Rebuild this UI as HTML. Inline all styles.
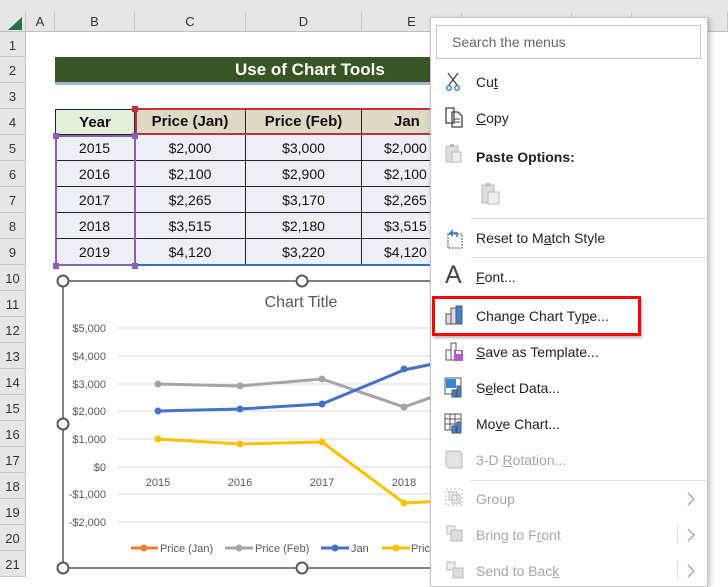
<!DOCTYPE html>
<html><head><style>
*{margin:0;padding:0;box-sizing:border-box}
body{width:728px;height:579px;overflow:hidden;background:#fff;font-family:"Liberation Sans",sans-serif;position:relative}
.a{position:absolute}
.ch{position:absolute;top:12px;height:20px;background:#e6e6e6;border-right:1px solid #c8c8c8;border-bottom:1px solid #bfbfbf;font-size:13px;color:#333;text-align:center;line-height:20px}
.rh{position:absolute;left:0;width:26px;height:26px;background:#e6e6e6;border-bottom:1px solid #c8c8c8;border-right:1px solid #bfbfbf;font-size:13px;color:#333;text-align:center;line-height:28px}
.c{position:absolute;height:26px;font-size:14px;text-align:center;line-height:26px;color:#111;border-right:1px solid #222;border-bottom:1px solid #222;background:#eceef8}
.h{font-weight:bold;font-size:15px;background:#ddd9c4}
.mi{position:absolute;left:476px;font-size:14px;color:#222}
.g{color:#a6a6a6}
.ic{position:absolute;left:444px}
</style></head><body>
<div class="a" style="left:0;top:0;width:728px;height:12px;background:#e6e6e6"></div>
<div class="ch" style="left:0;width:26px"><svg width="26" height="20"><polygon points="8,18 22,18 22,5" fill="#217346"/></svg></div>
<div class="ch" style="left:26px;width:29px">A</div>
<div class="ch" style="left:55px;width:80px">B</div>
<div class="ch" style="left:135px;width:111px">C</div>
<div class="ch" style="left:246px;width:116px">D</div>
<div class="ch" style="left:362px;width:100px">E</div>
<div class="ch" style="left:462px;width:110px"></div>
<div class="ch" style="left:572px;width:60px"></div>
<div class="ch" style="left:632px;width:96px"></div>
<div class="rh" style="top:32px;height:25px">1</div>
<div class="rh" style="top:57px">2</div>
<div class="rh" style="top:83px">3</div>
<div class="rh" style="top:109px">4</div>
<div class="rh" style="top:135px">5</div>
<div class="rh" style="top:161px">6</div>
<div class="rh" style="top:187px">7</div>
<div class="rh" style="top:213px">8</div>
<div class="rh" style="top:239px">9</div>
<div class="rh" style="top:265px">10</div>
<div class="rh" style="top:291px">11</div>
<div class="rh" style="top:317px">12</div>
<div class="rh" style="top:343px">13</div>
<div class="rh" style="top:369px">14</div>
<div class="rh" style="top:395px">15</div>
<div class="rh" style="top:421px">16</div>
<div class="rh" style="top:447px">17</div>
<div class="rh" style="top:473px">18</div>
<div class="rh" style="top:499px">19</div>
<div class="rh" style="top:525px">20</div>
<div class="rh" style="top:551px">21</div>

<div class="a" style="left:55px;top:57px;width:380px;height:25px;background:#375623;color:#fff;font-weight:bold;font-size:17px;line-height:26px;padding-left:180px">Use of Chart Tools</div>
<div class="a" style="left:55px;top:82px;width:380px;height:3px;background:#9fb6d9"></div>

<div class="c h" style="left:55px;top:109px;width:80px;background:#e2efda;border-top:1px solid #222;border-left:1px solid #222">Year</div>
<div class="c h" style="left:135px;top:109px;width:111px">Price (Jan)</div>
<div class="c h" style="left:246px;top:109px;width:116px">Price (Feb)</div>
<div class="c h" style="left:362px;top:109px;width:80px;text-align:left;padding-left:32px">Jan</div>
<div class="a" style="left:135px;top:108px;width:300px;height:2px;background:#c0313d"></div>
<div class="a" style="left:135px;top:108px;width:2px;height:27px;background:#c0313d"></div>
<div class="a" style="left:135px;top:133px;width:300px;height:2px;background:#c0313d"></div>

<div class="c" style="left:55px;top:135px;width:80px">2015</div><div class="c" style="left:135px;top:135px;width:111px">$2,000</div><div class="c" style="left:246px;top:135px;width:116px">$3,000</div><div class="c" style="left:362px;top:135px;width:80px;text-align:left;padding-left:22px">$2,000</div>
<div class="c" style="left:55px;top:161px;width:80px">2016</div><div class="c" style="left:135px;top:161px;width:111px">$2,100</div><div class="c" style="left:246px;top:161px;width:116px">$2,900</div><div class="c" style="left:362px;top:161px;width:80px;text-align:left;padding-left:22px">$2,100</div>
<div class="c" style="left:55px;top:187px;width:80px">2017</div><div class="c" style="left:135px;top:187px;width:111px">$2,265</div><div class="c" style="left:246px;top:187px;width:116px">$3,170</div><div class="c" style="left:362px;top:187px;width:80px;text-align:left;padding-left:22px">$2,265</div>
<div class="c" style="left:55px;top:213px;width:80px">2018</div><div class="c" style="left:135px;top:213px;width:111px">$3,515</div><div class="c" style="left:246px;top:213px;width:116px">$2,180</div><div class="c" style="left:362px;top:213px;width:80px;text-align:left;padding-left:22px">$3,515</div>
<div class="c" style="left:55px;top:239px;width:80px">2019</div><div class="c" style="left:135px;top:239px;width:111px">$4,120</div><div class="c" style="left:246px;top:239px;width:116px">$3,220</div><div class="c" style="left:362px;top:239px;width:80px;text-align:left;padding-left:22px">$4,120</div>
<div class="a" style="left:55px;top:135px;width:81px;height:131px;border:2px solid #8a5fb8"></div>
<div class="a" style="left:136px;top:264px;width:300px;height:2px;background:#2f6fc6"></div>
<div class="a" style="left:53px;top:133px;width:6px;height:6px;background:#8a5fb8"></div>
<div class="a" style="left:132px;top:133px;width:6px;height:6px;background:#8a5fb8"></div>
<div class="a" style="left:53px;top:263px;width:6px;height:6px;background:#8a5fb8"></div>
<div class="a" style="left:132px;top:263px;width:6px;height:6px;background:#8a5fb8"></div>
<div class="a" style="left:132px;top:106px;width:6px;height:6px;background:#c0313d"></div>

<svg class="a" style="left:0;top:0" width="440" height="579">
<g stroke="#595959" stroke-width="1.5" fill="none"><line x1="63" y1="281" x2="440" y2="281"/><line x1="63" y1="568" x2="440" y2="568"/><line x1="63" y1="281" x2="63" y2="568"/></g>
<text x="301" y="307" font-size="16" fill="#595959" text-anchor="middle" font-family="Liberation Sans">Chart Title</text>
<g stroke="#d9d9d9" stroke-width="1"><line x1="117" y1="328" x2="440" y2="328"/><line x1="117" y1="356" x2="440" y2="356"/><line x1="117" y1="384" x2="440" y2="384"/><line x1="117" y1="411" x2="440" y2="411"/><line x1="117" y1="439" x2="440" y2="439"/><line x1="117" y1="467" x2="440" y2="467"/><line x1="117" y1="494" x2="440" y2="494"/><line x1="117" y1="522" x2="440" y2="522"/></g>
<g font-size="11" fill="#595959" text-anchor="end" font-family="Liberation Sans"><text x="106" y="332">$5,000</text><text x="106" y="360">$4,000</text><text x="106" y="388">$3,000</text><text x="106" y="415">$2,000</text><text x="106" y="443">$1,000</text><text x="106" y="471">$0</text><text x="106" y="498">-$1,000</text><text x="106" y="526">-$2,000</text></g>
<g font-size="11" fill="#595959" text-anchor="middle" font-family="Liberation Sans"><text x="158" y="486">2015</text><text x="240" y="486">2016</text><text x="322" y="486">2017</text><text x="404" y="486">2018</text></g>
<g stroke-width="3" fill="none"><polyline stroke="#a5a5a5" points="158,384 240,386 322,379 404,407 486,378"/><polyline stroke="#4472c4" points="158,411 240,409 322,404 404,370 486,353"/><polyline stroke="#ffc000" points="158,439 240,444 322,442 404,503 486,499"/></g>
<g fill="#a5a5a5"><circle cx="158" cy="384" r="3.5"/><circle cx="240" cy="386" r="3.5"/><circle cx="322" cy="379" r="3.5"/><circle cx="404" cy="407" r="3.5"/></g>
<g fill="#4472c4"><circle cx="158" cy="411" r="3.5"/><circle cx="240" cy="409" r="3.5"/><circle cx="322" cy="404" r="3.5"/><circle cx="404" cy="369" r="3.5"/></g>
<g fill="#ffc000"><circle cx="158" cy="439" r="3.5"/><circle cx="240" cy="444" r="3.5"/><circle cx="322" cy="442" r="3.5"/><circle cx="404" cy="503" r="3.5"/></g>
<g stroke-width="3"><line x1="131" y1="548" x2="158" y2="548" stroke="#ed7d31"/><line x1="225" y1="548" x2="253" y2="548" stroke="#a5a5a5"/><line x1="321" y1="548" x2="349" y2="548" stroke="#4472c4"/><line x1="382" y1="548" x2="410" y2="548" stroke="#ffc000"/></g>
<circle cx="144" cy="548" r="3.5" fill="#ed7d31"/><circle cx="239" cy="548" r="3.5" fill="#a5a5a5"/><circle cx="335" cy="548" r="3.5" fill="#4472c4"/><circle cx="396" cy="548" r="3.5" fill="#ffc000"/>
<g font-size="11" fill="#595959" font-family="Liberation Sans"><text x="160" y="552">Price (Jan)</text><text x="255" y="552">Price (Feb)</text><text x="351" y="552">Jan</text><text x="411" y="552">Pric</text></g>
<g fill="#fff" stroke="#595959" stroke-width="2"><circle cx="63" cy="281" r="5.5"/><circle cx="302" cy="281" r="5.5"/><circle cx="63" cy="424" r="5.5"/><circle cx="63" cy="568" r="5.5"/><circle cx="302" cy="568" r="5.5"/></g>
</svg>

<div class="a" style="left:430px;top:17px;width:278px;height:570px;background:#fff;border:1px solid #c6c6c6;box-shadow:2px 2px 5px rgba(0,0,0,.25)"></div>
<div class="a" style="left:436px;top:25px;width:265px;height:34px;border:1px solid #c6c6c6;font-size:14px;color:#666;line-height:32px;padding-left:15px">Search the menus</div>

<svg class="ic" style="top:71px" width="20" height="22"><path d="M4 2 L13 14 M14 2 L5 14" stroke="#444" stroke-width="1.3" fill="none"/><circle cx="5" cy="17" r="2.3" stroke="#2e75c8" fill="none" stroke-width="1.3"/><circle cx="13" cy="17" r="2.3" stroke="#2e75c8" fill="none" stroke-width="1.3"/></svg>
<div class="mi" style="top:74px">Cu<u>t</u></div>
<svg class="ic" style="top:106px" width="22" height="22"><path d="M2 2h8v15H2z M8 6h6l4 4v11H8z" stroke="#444" fill="#fff" stroke-width="1.3"/><path d="M10 13h6M10 16h6" stroke="#444"/></svg>
<div class="mi" style="top:110px"><u>C</u>opy</div>
<svg class="ic" style="top:142px" width="22" height="22"><path d="M2 4h12v16H2z" stroke="#bbb" fill="#ddd"/><path d="M6 2h4v3H6z" fill="#bbb"/><path d="M8 10h9v10H8z" stroke="#bbb" fill="#eee"/></svg>
<div class="mi" style="top:149px;font-weight:bold">Paste Options:</div>
<svg class="a" style="left:480px;top:181px" width="22" height="26"><path d="M2 4h12v18H2z" stroke="#bbb" fill="#ddd"/><path d="M6 2h4v3H6z" fill="#bbb"/><path d="M8 11h11v12H8z" stroke="#bbb" fill="#eee"/></svg>
<div class="a" style="left:471px;top:218px;width:236px;height:1px;background:#e1e1e1"></div>
<svg class="ic" style="top:226px" width="22" height="24"><path d="M4 8h14v14H4z" stroke="#555" fill="#fff" stroke-dasharray="2 1"/><path d="M9 4L6 7l3 3M6 7h7v4" stroke="#2e75c8" fill="none" stroke-width="1.5"/></svg>
<div class="mi" style="top:230px">Reset to M<u>a</u>tch Style</div>
<div class="a" style="left:471px;top:257px;width:236px;height:1px;background:#e1e1e1"></div>
<div class="a" style="left:445px;top:261px;font-size:25px;color:#444">A</div>
<div class="mi" style="top:269px"><u>F</u>ont...</div>
<div class="a" style="left:432px;top:296px;width:209px;height:40px;border:3px solid #f00;box-shadow:1px 2px 3px rgba(0,0,0,.3)"></div>
<svg class="ic" style="top:304px" width="22" height="22"><path d="M2 10h5v10H2zM7 4h5v16H7z" stroke="#555" fill="#ddd"/><path d="M12 2h6v18h-6z" stroke="#555" fill="#3b86d4"/></svg>
<div class="mi" style="top:308px">Change Chart Ty<u>p</u>e...</div>
<svg class="ic" style="top:340px" width="22" height="22"><path d="M2 10h5v10H2zM7 3h5v17H7z" stroke="#555" fill="#fff"/><path d="M10 10h9v11h-9z" fill="#b55ac8"/><path d="M12 11h5v3h-5z" fill="#fff"/></svg>
<div class="mi" style="top:344px"><u>S</u>ave as Template...</div>
<svg class="ic" style="top:376px" width="22" height="22"><path d="M1 2h16v16H1z" stroke="#555" fill="#fff"/><path d="M2 3h10v9H2z" fill="#3b86d4"/><path d="M13 10h4v11h-4zM8 14h4v7H8z" stroke="#555" fill="#3b86d4"/></svg>
<div class="mi" style="top:380px">S<u>e</u>lect Data...</div>
<svg class="ic" style="top:412px" width="22" height="22"><path d="M1 2h16v16H1zM1 7h16M1 12h16M6 2v16M11 2v16" stroke="#555" fill="#fff"/><path d="M13 10h4v11h-4zM8 14h4v7H8z" stroke="#555" fill="#3b86d4"/></svg>
<div class="mi" style="top:416px">Mo<u>v</u>e Chart...</div>
<svg class="ic" style="top:448px" width="22" height="22"><path d="M2 3h13l3 3v14H5l-3-3z" stroke="#bbb" fill="#e3e3e3"/></svg>
<div class="mi g" style="top:452px">3-D <u>R</u>otation...</div>
<div class="a" style="left:471px;top:480px;width:236px;height:1px;background:#e1e1e1"></div>
<svg class="ic" style="top:487px" width="22" height="22"><path d="M2 2h16v16H2z" stroke="#bbb" fill="none" stroke-dasharray="2 2"/><path d="M5 5h8v8H5zM8 8h8v8H8z" stroke="#bbb" fill="#eee"/></svg>
<div class="mi g" style="top:491px">Group</div>
<svg class="a" style="left:686px;top:491px" width="10" height="16"><path d="M2 2l6 6-6 6" stroke="#999" fill="none" stroke-width="1.2"/></svg>
<svg class="ic" style="top:523px" width="22" height="22"><path d="M3 3h8v8H3z" stroke="#bbb" fill="#eee"/><path d="M7 7h11v11H7z" stroke="#bbb" fill="#ddd"/></svg>
<div class="mi g" style="top:527px">Bring to F<u>r</u>ont</div>
<div class="a" style="left:677px;top:525px;width:1px;height:18px;background:#ddd"></div>
<svg class="a" style="left:686px;top:527px" width="10" height="16"><path d="M2 2l6 6-6 6" stroke="#999" fill="none" stroke-width="1.2"/></svg>
<svg class="ic" style="top:559px" width="22" height="22"><path d="M3 3h8v8H3z" stroke="#bbb" fill="#eee"/><path d="M9 9h10v10H9z" stroke="#bbb" fill="#ddd"/></svg>
<div class="mi g" style="top:563px">Send to Bac<u>k</u></div>
<div class="a" style="left:677px;top:561px;width:1px;height:18px;background:#ddd"></div>
<svg class="a" style="left:686px;top:563px" width="10" height="16"><path d="M2 2l6 6-6 6" stroke="#999" fill="none" stroke-width="1.2"/></svg>
</body></html>
